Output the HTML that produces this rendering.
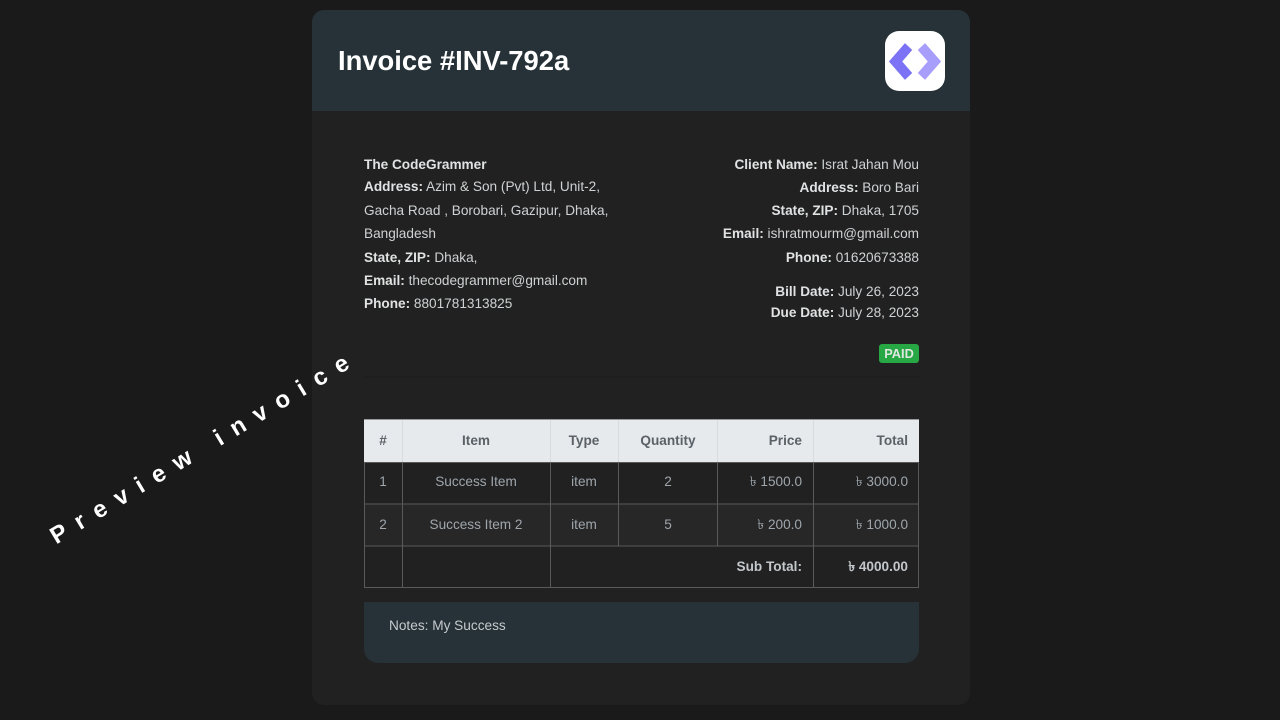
<!DOCTYPE html>
<html><head><meta charset="utf-8">
<style>
html,body{margin:0;padding:0;width:1280px;height:720px;overflow:hidden;background:#1a1a1a;font-family:"Liberation Sans",sans-serif;}
.a{position:absolute;white-space:nowrap;}
#card{position:absolute;left:312px;top:10px;width:658px;height:695px;background:#212121;border-radius:12px;overflow:hidden;}
#head{position:absolute;left:0;top:0;width:658px;height:101px;background:#263238;}
.t{font-size:13.62px;line-height:20px;color:#cfd2d4;}
.t b{color:#e0e2e3;}
.r{right:361px;text-align:right;}
.l{left:364px;}
.h{font-size:13.6px;font-weight:bold;color:#5a6268;line-height:20px;}
.c{font-size:13.6px;color:#9ea6ac;line-height:20px;}
.ctr{transform:translateX(-50%);}
.rt{transform:translateX(-100%);}
</style></head><body>
<div id="card"><div id="head"></div></div>
<div class="a" style="left:338px;top:43px;font-size:27.370px;line-height:36px;font-weight:bold;color:#fff;">Invoice #INV-792a</div>
<div class="a" style="left:885px;top:31px;width:60px;height:60px;background:#fff;border-radius:14px;"></div>
<svg class="a" style="left:885px;top:31px" width="60" height="60" viewBox="0 0 60 60">
<path d="M20 12.800 L26.500 19 L16.500 30.500 L26.500 42 L20 48.200 L4.600 30.500 Z" fill="#7b72f5" stroke="#7b72f5" stroke-width="1" stroke-linejoin="round"/>
<path d="M40 12.800 L33.500 19 L43.500 30.500 L33.500 42 L40 48.200 L55.400 30.500 Z" fill="#a79dfb" stroke="#a79dfb" stroke-width="1" stroke-linejoin="round"/>
</svg>

<div class="a t l" style="top:155px"><b>The CodeGrammer</b></div>
<div class="a t l" style="top:177px"><b>Address:</b> Azim &amp; Son (Pvt) Ltd, Unit-2,</div>
<div class="a t l" style="top:201px">Gacha Road , Borobari, Gazipur, Dhaka,</div>
<div class="a t l" style="top:224px">Bangladesh</div>
<div class="a t l" style="top:248px"><b>State, ZIP:</b> Dhaka,</div>
<div class="a t l" style="top:271px"><b>Email:</b> thecodegrammer@gmail.com</div>
<div class="a t l" style="top:294px"><b>Phone:</b> 8801781313825</div>

<div class="a t r" style="top:155px"><b>Client Name:</b> Israt Jahan Mou</div>
<div class="a t r" style="top:178px"><b>Address:</b> Boro Bari</div>
<div class="a t r" style="top:201px"><b>State, ZIP:</b> Dhaka, 1705</div>
<div class="a t r" style="top:224px"><b>Email:</b> ishratmourm@gmail.com</div>
<div class="a t r" style="top:248px"><b>Phone:</b> 01620673388</div>
<div class="a t r" style="top:282px"><b>Bill Date:</b> July 26, 2023</div>
<div class="a t r" style="top:303px"><b>Due Date:</b> July 28, 2023</div>
<div class="a" style="left:879px;top:344px;width:40px;height:19px;background:#28a745;border-radius:3px;color:#dfe8e0;font-size:12.800px;font-weight:bold;line-height:19px;text-align:center;">PAID</div>
<div class="a" style="left:364px;top:376px;width:555px;height:2px;background:#1e1e1e;"></div>

<div class="a" style="left:364px;top:419px;width:555px;height:43px;background:#e7eaed;"></div>
<div class="a" style="left:364px;top:504px;width:555px;height:42px;background:#272727;"></div>
<div class="a" style="left:364px;top:419px;width:555px;height:1px;background:#666;opacity:.6"></div>
<svg class="a" style="left:0;top:0" width="1280" height="720">
<g stroke="#d8dbde" stroke-width="1"><path d="M402.500 420V462M550.500 420V462M618.500 420V462M717.500 420V462M813.500 420V462"/></g>
<g stroke="#5a5a5a" stroke-width="1" fill="none">
<path d="M364 462.500H919M364 504H919M364 546H919M364 587.500H919"/>
<path d="M364.500 462V588M402.500 462V588M550.500 462V588M618.500 462V546M717.500 462V546M813.500 462V588M918.500 462V588"/>
</g>
</svg>

<div class="a h ctr" style="left:383px;top:431px">#</div>
<div class="a h ctr" style="left:476px;top:431px">Item</div>
<div class="a h ctr" style="left:584px;top:431px">Type</div>
<div class="a h ctr" style="left:668px;top:431px">Quantity</div>
<div class="a h rt" style="left:802px;top:431px">Price</div>
<div class="a h rt" style="left:908px;top:431px">Total</div>

<div class="a c ctr" style="left:383px;top:472px">1</div>
<div class="a c ctr" style="left:476px;top:472px">Success Item</div>
<div class="a c ctr" style="left:584px;top:472px">item</div>
<div class="a c ctr" style="left:668px;top:472px">2</div>
<div class="a c rt" style="left:802px;top:472px">৳ 1500.0</div>
<div class="a c rt" style="left:908px;top:472px">৳ 3000.0</div>

<div class="a c ctr" style="left:383px;top:515px">2</div>
<div class="a c ctr" style="left:476px;top:515px">Success Item 2</div>
<div class="a c ctr" style="left:584px;top:515px">item</div>
<div class="a c ctr" style="left:668px;top:515px">5</div>
<div class="a c rt" style="left:802px;top:515px">৳ 200.0</div>
<div class="a c rt" style="left:908px;top:515px">৳ 1000.0</div>

<div class="a c rt" style="left:802px;top:557px;font-weight:bold;color:#c3c8cc">Sub Total:</div>
<div class="a c rt" style="left:908px;top:557px;font-weight:bold;color:#c3c8cc">৳ 4000.00</div>

<div class="a" style="left:364px;top:602px;width:555px;height:61px;background:#263238;border-radius:0 0 14px 14px;"></div>
<div class="a" style="left:389px;top:616px;font-size:13.65px;line-height:20px;color:#c6cbce;">Notes: My Success</div>

<div class="a" id="pv" style="left:204.500px;top:446.500px;font-size:24px;line-height:28px;font-weight:bold;color:#fff;letter-spacing:11.700px;transform:translate(-50%,-50%) rotate(-31deg);">Preview invoice</div>
</body></html>
